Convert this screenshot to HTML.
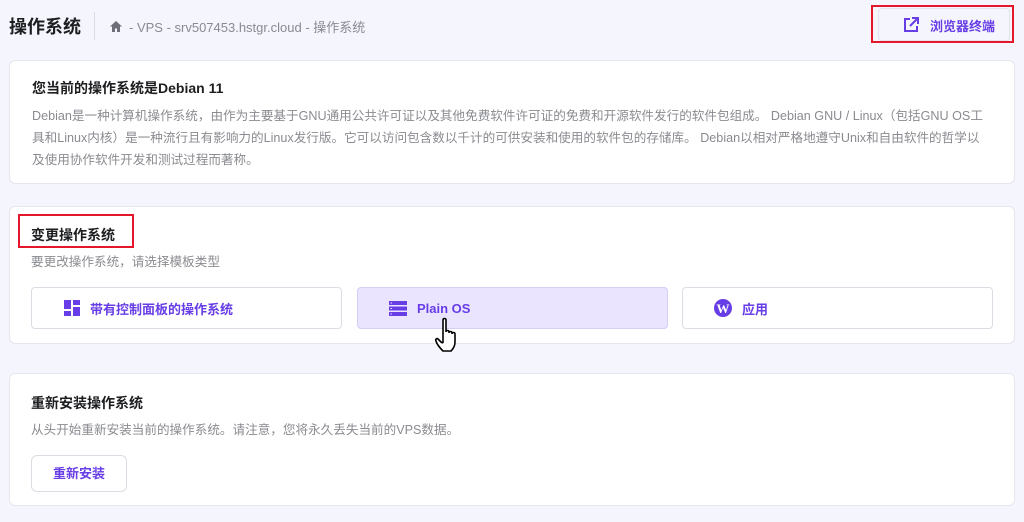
<!DOCTYPE html>
<html><head><meta charset="utf-8"><style>
*{box-sizing:border-box;margin:0;padding:0}
body{width:1024px;height:522px;background:#f4f5fd;font-family:"Liberation Sans","Noto Sans CJK SC",sans-serif;position:relative;overflow:hidden;color:#2f1c6a}
.abs{position:absolute}
.card{position:absolute;left:9px;width:1006px;background:#fff;border:1px solid #e6e7ee;border-radius:6px}
h2{font-size:14px;font-weight:700;color:#1d1e20}
.p{font-size:12.6px;color:#8a8b90;line-height:22px}
.btn{position:absolute;top:80px;height:42px;width:311px;border:1px solid #dcdde4;border-radius:4px;background:#fff;font-size:13px;font-weight:700;color:#673de6;display:flex;align-items:center}
.red{position:absolute;border:2px solid #e5172a}
</style></head><body>
<div class="abs" style="left:9px;top:13px;font-size:18px;font-weight:700;color:#1d1e20">操作系统</div>
<div class="abs" style="left:94px;top:12px;width:1px;height:28px;background:#dcdde4"></div>
<div class="abs" style="left:109px;top:17px;font-size:13px;color:#8a8b90;display:flex;align-items:center">
<svg width="14" height="13" viewBox="0 0 14 13"><path d="M7 1 L1 6.5 H3 V12 H6 V8.5 H8 V12 H11 V6.5 H13 Z" fill="#6d6e78"/></svg>
<span style="margin-left:6px">- VPS - srv507453.hstgr.cloud - 操作系统</span></div>
<div class="abs" style="left:878px;top:8px;width:132px;height:33px;background:#f4f5fd;border:1px solid #e1e2ea;border-radius:4px"></div>
<div class="red" style="left:871px;top:5px;width:143px;height:38px"></div>
<svg class="abs" style="left:903px;top:17px" width="16" height="16" viewBox="0 0 16 16" fill="none" stroke="#673de6" stroke-width="2"><path d="M7 2H2v12h12V9M9 1h6v6M15 1 7 9"/></svg>
<div class="abs" style="left:930px;top:16px;font-size:13px;font-weight:700;color:#673de6">浏览器终端</div>

<div class="card" style="top:60px;height:124px">
<h2 style="position:absolute;left:22px;top:17px">您当前的操作系统是Debian 11</h2>
<div class="p" style="position:absolute;left:22px;top:44px;width:956px">Debian是一种计算机操作系统，由作为主要基于GNU通用公共许可证以及其他免费软件许可证的免费和开源软件发行的软件包组成。 Debian GNU / Linux（包括GNU OS工具和Linux内核）是一种流行且有影响力的Linux发行版。它可以访问包含数以千计的可供安装和使用的软件包的存储库。 Debian以相对严格地遵守Unix和自由软件的哲学以及使用协作软件开发和测试过程而著称。</div>
</div>

<div class="card" style="top:206px;height:138px">
<h2 style="position:absolute;left:21px;top:18px">变更操作系统</h2>
<div class="p" style="position:absolute;left:21px;top:44px">要更改操作系统，请选择模板类型</div>
<div class="btn" style="left:21px"><svg style="margin-left:32px;margin-right:10px" width="16" height="16" viewBox="0 0 16 16" fill="#673de6"><rect x="0" y="0" width="7" height="9"/><rect x="9" y="0" width="7" height="5"/><rect x="0" y="11" width="7" height="5"/><rect x="9" y="7" width="7" height="9"/></svg>带有控制面板的操作系统</div>
<div class="btn" style="left:347px;background:#ebe4ff;border-color:#d5cdf5"><svg style="margin-left:31px;margin-right:10px" width="18" height="15" viewBox="0 0 18 15" fill="#673de6"><rect x="0" y="0" width="18" height="4"/><rect x="0" y="5.5" width="18" height="4"/><rect x="0" y="11" width="18" height="4"/><rect x="1.5" y="1.5" width="1.5" height="1" fill="#ebe4ff"/><rect x="1.5" y="7" width="1.5" height="1" fill="#ebe4ff"/><rect x="1.5" y="12.5" width="1.5" height="1" fill="#ebe4ff"/></svg>Plain OS</div>
<div class="btn" style="left:672px"><svg style="margin-left:31px;margin-right:10px" width="18" height="18" viewBox="0 0 18 18"><circle cx="9" cy="9" r="9" fill="#673de6"/><text x="9" y="14" font-size="13" font-weight="700" text-anchor="middle" fill="#fff" font-family="Liberation Serif">W</text></svg>应用</div>
</div>
<div class="red" style="left:18px;top:214px;width:116px;height:34px"></div>
<svg class="abs" style="left:434px;top:317px" width="32" height="36" viewBox="0 0 32 36"><path d="M9 3c0-2 3-2 3 0v12c0-2 3-2 3 0v1c0-2 3-2 3 0v1c0-2 3-2 3 0v8c0 4-2 7-4 9H9c-2-2-6-6-7-10-1-2 1-3 2-2l3 3c1 1 2 1 2 0z" fill="#fff" stroke="#000" stroke-width="1.6"/></svg>

<div class="card" style="top:373px;height:133px">
<h2 style="position:absolute;left:21px;top:19px">重新安装操作系统</h2>
<div class="p" style="position:absolute;left:21px;top:45px">从头开始重新安装当前的操作系统。请注意，您将永久丢失当前的VPS数据。</div>
<div style="position:absolute;left:21px;top:81px;width:96px;height:37px;border:1px solid #dcdde4;border-radius:6px;font-size:13px;font-weight:700;color:#673de6;text-align:center;line-height:35px">重新安装</div>
</div>
</body></html>
